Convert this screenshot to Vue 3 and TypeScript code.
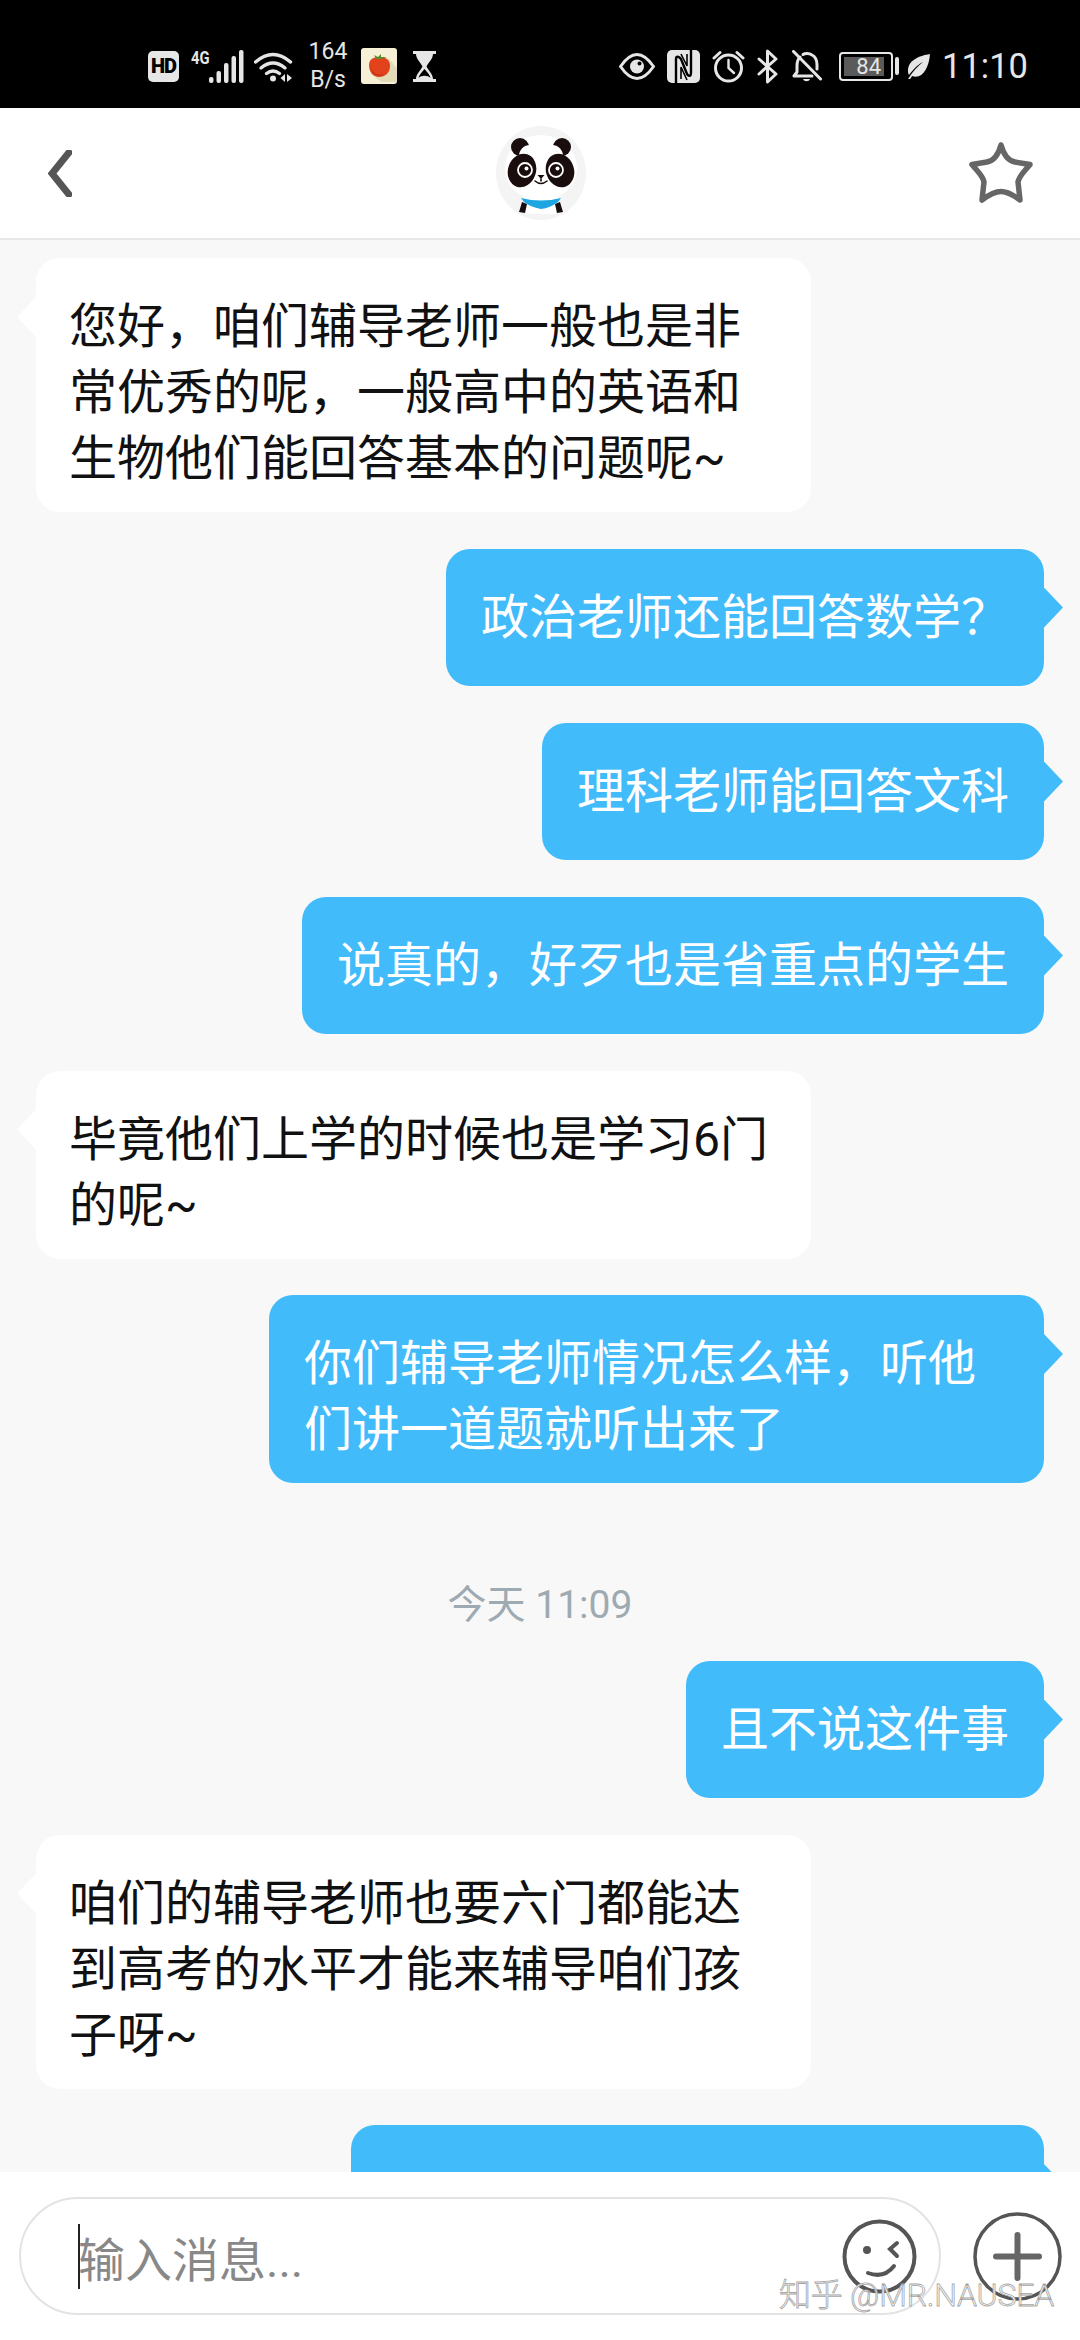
<script setup lang="ts">
interface Message {
  side: 'left' | 'right'
  text: string
}

interface ChatItem extends Message {
  id: number
}

// Chat history, oldest first
const firstMessages: Message[] = [
  { side: 'left', text: '您好，咱们辅导老师一般也是非常优秀的呢，一般高中的英语和生物他们能回答基本的问题呢~' },
  { side: 'right', text: '政治老师还能回答数学？' },
  { side: 'right', text: '理科老师能回答文科' },
  { side: 'right', text: '说真的，好歹也是省重点的学生' },
  { side: 'left', text: '毕竟他们上学的时候也是学习6门的呢~' },
  { side: 'right', text: '你们辅导老师情况怎么样，听他们讲一道题就听出来了' }
]

const laterMessages: Message[] = [
  { side: 'right', text: '且不说这件事' },
  { side: 'left', text: '咱们的辅导老师也要六门都能达到高考的水平才能来辅导咱们孩子呀~' }
]

const withIds = (list: Message[]): ChatItem[] => list.map((m, i) => ({ ...m, id: i }))
const before = withIds(firstMessages)
const after = withIds(laterMessages)
</script>

<template>
  <div class="phone">
    <!-- Status bar -->
    <div class="status-bar">
      <div class="hd">HD</div>
      <div class="net">
        <span class="net-text">4G</span>
        <svg width="35" height="33" viewBox="18 0 35 33">
          <g fill="#e6e6e6">
            <rect x="18" y="27" width="4.5" height="6" rx="2" />
            <rect x="25.5" y="21" width="4.5" height="12" rx="2" />
            <rect x="33" y="13" width="4.5" height="20" rx="2" />
            <rect x="40.5" y="6" width="4.5" height="27" rx="2" />
            <rect x="48" y="0" width="4.5" height="33" rx="2" />
          </g>
        </svg>
      </div>
      <svg class="ic-wifi" width="40" height="32" viewBox="0 0 40 32">
        <g fill="none" stroke="#e6e6e6" stroke-width="3.4" stroke-linecap="round">
          <path d="M1.5 12 Q19 -3 36.5 12" />
          <path d="M7 18 Q19 8 31 18" />
          <path d="M12.5 23.5 Q19 18.5 25.5 23.5" />
        </g>
        <circle cx="19" cy="28.5" r="3" fill="#e6e6e6" />
        <path d="M26.5 28 L31 24 V32 Z M33 24 L38 28 L33 32 Z" fill="#e6e6e6" />
      </svg>
      <div class="speed">
        <span>164</span>
        <span>B/s</span>
      </div>
      <svg class="ic-tomato" width="36" height="36" viewBox="0 0 36 36">
        <rect width="36" height="36" rx="3" fill="#f6f1d6" />
        <path d="M10 26 L20 34 H36 V20 L27 10 Z" fill="#e3dcb6" />
        <path d="M8 17 C8 11 13 9 18 9 C24 9 29 11 29 18 C29 25 24 29 18 29 C12 29 8 24 8 17 Z" fill="#e2431c" />
        <path d="M9 19 C12 26 18 28 24 26 C20 30 11 29 9 19 Z" fill="#c9321a" />
        <path d="M13 7 L17 9 L20 6 L20 9 L26 9 L20 11 L15 11 Z" fill="#5c8a2c" />
      </svg>
      <svg class="ic-glass" width="25" height="31" viewBox="0 0 25 31">
        <path d="M1 0 H24 V3 H21 C21 8 16 12 14.5 15.5 C16 19 21 23 21 28 H24 V31 H1 V28 H4 C4 23 9 19 10.5 15.5 C9 12 4 8 4 3 H1 Z" fill="#e6e6e6" />
        <path d="M12.5 18 C10 21 7 24 6.5 27 C9 24 16 24 18.5 27 C18 24 15 21 12.5 18 Z" fill="#000" />
      </svg>

      <svg class="ic-eye" width="36" height="27" viewBox="0 0 36 27">
        <path d="M1.5 13.5 C8 4 13 1.5 18 1.5 S28 4 34.5 13.5 C28 23 23 25.5 18 25.5 S8 23 1.5 13.5 Z" fill="none" stroke="#e6e6e6" stroke-width="3" />
        <circle cx="18" cy="13.5" r="7" fill="#e6e6e6" />
        <circle cx="20.5" cy="10.5" r="2" fill="#000" />
      </svg>
      <svg class="ic-nfc" width="33" height="33" viewBox="0 0 33 33">
        <rect width="33" height="33" rx="5" fill="#e6e6e6" />
        <path d="M9 33 V9 C9 6 12 6 14 9 L20 24 C22 27 24 26 24 23 V0" fill="none" stroke="#000" stroke-width="2.4" />
        <path d="M14 29 V17 L20 30 M20 4 V16 L14 4" fill="none" stroke="#000" stroke-width="1.6" />
      </svg>
      <svg class="ic-alarm" width="33" height="33" viewBox="0 0 33 33">
        <g fill="none" stroke="#e6e6e6" stroke-width="3" stroke-linecap="round">
          <circle cx="16.5" cy="18" r="13" />
          <path d="M16.5 10 V18 L22 23" stroke-width="2.4" />
          <path d="M2 8 L8 2.5 M31 8 L25 2.5" />
        </g>
      </svg>
      <svg class="ic-bt" width="21" height="35" viewBox="0 0 21 35">
        <path d="M2 10 L19 25 L10.5 33 V2 L19 10 L2 25" fill="none" stroke="#e6e6e6" stroke-width="3" stroke-linecap="round" stroke-linejoin="round" />
      </svg>
      <svg class="ic-bell" width="30" height="32" viewBox="0 0 30 32">
        <g fill="none" stroke="#e6e6e6" stroke-width="3" stroke-linecap="round" stroke-linejoin="round">
          <path d="M8 7 C5 10 5 13 5 16 V22 L2 26 H20" />
          <path d="M11 4.5 C13 3 17 3 20 5 C24 7 25 11 25 15 V19" />
          <path d="M1.5 1.5 L28.5 29" />
        </g>
        <path d="M11 29 H18 C17 32 12 32 11 29 Z" fill="#e6e6e6" />
      </svg>
      <div class="battery">
        <div class="battery-body">
          <div class="battery-level">84</div>
        </div>
        <div class="battery-tip"></div>
      </div>
      <svg class="ic-leaf" width="23" height="25" viewBox="0 0 23 25">
        <path d="M23 0 C12 2 1 6 1 17 C1 19 1.5 20 2 21 C8 13 12 10 16 8 C11 12 6 17 1 25 L3 25 C4 24 4.5 23 5 22 C15 26 22 14 23 0 Z" fill="#e6e6e6" />
      </svg>
      <div class="clock">11:10</div>
    </div>

    <!-- Header -->
    <div class="chat-header">
      <svg class="back" width="24" height="47" viewBox="0 0 24 47">
        <polyline points="23,0 4,23.5 23,47" fill="none" stroke="#555" stroke-width="7" />
      </svg>
      <svg class="panda" width="90" height="94" viewBox="0 0 90 94">
        <ellipse cx="45" cy="47" rx="45" ry="47" fill="#f4f4f4" />
        <ellipse cx="45" cy="42" rx="36" ry="33" fill="#fff" />
        <path d="M28 68 H62 L60 88 H30 Z" fill="#fff" />
        <circle cx="24" cy="21" r="9" fill="#1a0d0e" />
        <circle cx="66" cy="21" r="9" fill="#1a0d0e" />
        <circle cx="34" cy="30" r="11" fill="#fff" />
        <circle cx="56" cy="30" r="11" fill="#fff" />
        <ellipse cx="26" cy="44.5" rx="14" ry="17" fill="#1a0d0e" transform="rotate(18 26 44.5)" />
        <ellipse cx="64" cy="44.5" rx="14" ry="17" fill="#1a0d0e" transform="rotate(-18 64 44.5)" />
        <circle cx="29" cy="44" r="7" fill="none" stroke="#fff" stroke-width="1.8" />
        <circle cx="60" cy="44" r="7" fill="none" stroke="#fff" stroke-width="1.8" />
        <circle cx="30.5" cy="42.5" r="2" fill="#fff" />
        <circle cx="61.5" cy="42.5" r="2" fill="#fff" />
        <path d="M41.5 49 H48.5 L45 53 Z" fill="#1a0d0e" />
        <path d="M45 53 V55 M39 55 Q45 60 51 55" fill="none" stroke="#1a0d0e" stroke-width="1.6" stroke-linecap="round" />
        <path d="M26 76 L23 86 L29 87 L31 78 Z M64 76 L67 86 L61 87 L59 78 Z" fill="#1a0d0e" />
        <path d="M25 72 Q45 77 65 72 L62 76 Q54 82 45 83 Q34 81 28 76 Z" fill="#1ea6e2" />
      </svg>
      <svg class="star" width="64" height="62" viewBox="0 0 64 62">
        <path d="M32 3 C35 14 40 19 46 20 L61 22.5 C55 30 50 34 49 40 L51 58 C43 52 38 49.5 32 49.5 C26 49.5 21 52 13 58 L15 40 C14 34 9 30 3 22.5 L18 20 C24 19 29 14 32 3 Z" fill="none" stroke="#666" stroke-width="5.5" stroke-linejoin="round" />
      </svg>
    </div>

    <!-- Messages -->
    <div class="messages">
      <div v-for="m in before" :key="m.id" class="bubble" :class="m.side">{{ m.text }}</div>
      <div class="time-label">今天 11:09</div>
      <div v-for="m in after" :key="m.id" class="bubble" :class="m.side">{{ m.text }}</div>
      <!-- Next bubble, cut off by the input bar -->
      <div class="bubble right cut-off"></div>
    </div>

    <!-- Input bar -->
    <div class="input-bar">
      <div class="input-box">
        <span class="caret"></span>
        <span class="placeholder">输入消息...</span>
        <svg class="smile" width="75" height="75" viewBox="0 0 75 75">
          <g fill="none" stroke="#555" stroke-width="4" stroke-linecap="round">
            <circle cx="37.5" cy="37.5" r="35" />
            <polyline points="55,24 48,30 55,37" />
            <path d="M26 54 Q42 60 52 47" />
          </g>
          <circle cx="25" cy="31" r="4" fill="#555" />
        </svg>
      </div>
      <svg class="plus" width="89" height="89" viewBox="0 0 89 89">
        <circle cx="44.5" cy="44.5" r="42.5" fill="none" stroke="#555" stroke-width="3.5" />
        <path d="M23 44.5 H66 M44.5 23 V66" fill="none" stroke="#666" stroke-width="6" stroke-linecap="round" />
      </svg>
    </div>

    <div class="watermark">知乎 @MR.NAUSEA</div>
  </div>
</template>

<style>
body {
  margin: 0;
}
</style>

<style scoped>
.phone {
  position: relative;
  width: 1080px;
  height: 2340px;
  display: flex;
  flex-direction: column;
  overflow: hidden;
  background: #f8f8f8;
  font-family: Roboto, "Noto Sans CJK SC", sans-serif;
}

.status-bar {
  flex: none;
  height: 108px;
  box-sizing: border-box;
  padding: 24px 52px 0 148px;
  display: flex;
  align-items: center;
  background: #000;
  color: #e6e6e6;
}

.hd {
  width: 31px;
  height: 31px;
  border-radius: 5px;
  background: #e6e6e6;
  color: #000;
  font-size: 20px;
  font-weight: 900;
  line-height: 31px;
  text-align: center;
  letter-spacing: -1px;
}

.net {
  margin-left: 12px;
  display: flex;
  align-items: flex-start;
}

.net-text {
  width: 18px;
  font-size: 18px;
  font-weight: 700;
  line-height: 15px;
  transform: scaleX(0.82);
  transform-origin: left;
  white-space: nowrap;
}

.ic-wifi { margin-left: 10px; }
.speed {
  margin-left: 15px;
  width: 38px;
  display: flex;
  flex-direction: column;
  align-items: center;
  font-size: 23px;
  line-height: 28px;
}
.ic-tomato { margin-left: 14px; }
.ic-glass { margin-left: 15px; }
.ic-eye { margin-left: auto; }
.ic-nfc { margin-left: 12px; }
.ic-alarm { margin-left: 12px; }
.ic-bt { margin-left: 12px; }
.ic-bell { margin-left: 14px; }

.battery {
  margin-left: 17px;
  display: flex;
  align-items: center;
  gap: 2px;
}

.battery-body {
  width: 54px;
  height: 29px;
  box-sizing: border-box;
  padding: 3px 7px 3px 3px;
  border: 2px solid #e6e6e6;
  border-radius: 4px;
}

.battery-level {
  height: 19px;
  background: #5a5a5a;
  font-size: 22px;
  line-height: 19px;
  text-align: right;
  padding-right: 3px;
}

.battery-tip {
  width: 4px;
  height: 18px;
  border-radius: 2px;
  background: #e6e6e6;
}

.ic-leaf { margin-left: 8px; }

.clock {
  margin-left: 12px;
  font-size: 34.5px;
  line-height: 36px;
}

.chat-header {
  flex: none;
  height: 132px;
  box-sizing: border-box;
  padding: 0 47px 0 48px;
  display: grid;
  grid-template-columns: 1fr auto 1fr;
  align-items: center;
  background: #fff;
  border-bottom: 2px solid #e8e8e8;
}

.star {
  justify-self: end;
}

.messages {
  flex: 1;
  min-height: 0;
  box-sizing: border-box;
  padding: 18px 36px 0;
  display: flex;
  flex-direction: column;
  gap: 36.5px;
  overflow: hidden;
}

.bubble {
  position: relative;
  flex: none;
  box-sizing: border-box;
  max-width: 775px;
  min-height: 137.5px;
  padding: 36px 35px 20px;
  border-radius: 24px;
  font-size: 48px;
  line-height: 66px;
}

.bubble.left {
  align-self: flex-start;
  width: 775px;
  padding-left: 33px;
  background: #fff;
  color: #111;
}

.bubble.right {
  align-self: flex-end;
  background: #42bbfb;
  color: #fff;
}

/* tail */
.bubble::after {
  content: '';
  position: absolute;
  top: 39px;
  width: 19px;
  height: 40px;
}

.bubble.left::after {
  left: -19px;
  background: #fff;
  clip-path: polygon(100% 0, 0 50%, 100% 100%);
}

.bubble.right::after {
  right: -19px;
  background: #42bbfb;
  clip-path: polygon(0 0, 100% 50%, 0 100%);
}

.bubble.cut-off {
  width: 693px;
  height: 188px;
}

.time-label {
  flex: none;
  margin-top: 66.5px;
  text-align: center;
  font-size: 39px;
  line-height: 38px;
  color: #9eaab2;
}

.input-bar {
  position: relative;
  flex: none;
  height: 168px;
  box-sizing: border-box;
  padding-left: 19px;
  display: flex;
  align-items: center;
  gap: 32px;
  background: #fff;
}

.input-box {
  width: 922px;
  height: 118px;
  box-sizing: border-box;
  padding: 0 22px 0 57px;
  display: flex;
  align-items: center;
  border: 2px solid #e3e3e3;
  border-radius: 59px;
}

.caret {
  width: 2px;
  height: 65px;
  background: #222;
}

.placeholder {
  margin-left: -2px;
  font-size: 47px;
  color: #888;
}

.smile {
  margin-left: auto;
}

.watermark {
  position: absolute;
  right: 26px;
  bottom: 28px;
  font-size: 32px;
  line-height: 34px;
  font-weight: 300;
  letter-spacing: -0.2px;
  color: #fff;
  -webkit-text-stroke: 0.8px #a5a5a5;
}
</style>
